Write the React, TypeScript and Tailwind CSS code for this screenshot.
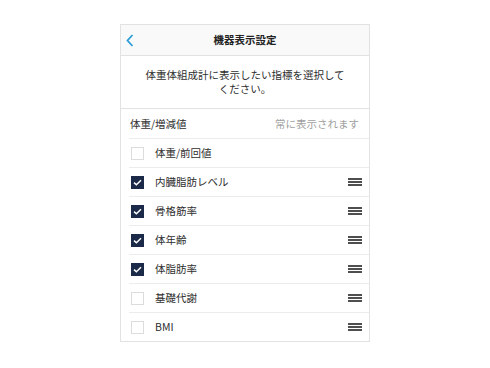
import React from 'react';

const items = [
  { label: '体重/前回値', checked: false, handle: false },
  { label: '内臓脂肪レベル', checked: true, handle: true },
  { label: '骨格筋率', checked: true, handle: true },
  { label: '体年齢', checked: true, handle: true },
  { label: '体脂肪率', checked: true, handle: true },
  { label: '基礎代謝', checked: false, handle: true },
  { label: 'BMI', checked: false, handle: true },
];

function CheckBox({ checked }: { checked: boolean }) {
  if (checked) {
    return (
      <span className="flex h-[13px] w-[13px] shrink-0 items-center justify-center bg-[#1b2a48]">
        <svg width="9" height="7" viewBox="0 0 9 7">
          <polyline points="1,3.6 3.4,5.8 8,1.2" fill="none" stroke="#fff" strokeWidth="1.5" />
        </svg>
      </span>
    );
  }
  return <span className="h-[13px] w-[13px] shrink-0 border border-[#dcdcdc] bg-white" />;
}

function Handle() {
  return (
    <svg width="14" height="8" viewBox="0 0 14 8" className="shrink-0">
      <line x1="0" y1="1" x2="14" y2="1" stroke="#222" strokeWidth="1.6" />
      <line x1="0" y1="4" x2="14" y2="4" stroke="#222" strokeWidth="1.6" />
      <line x1="0" y1="7" x2="14" y2="7" stroke="#222" strokeWidth="1.6" />
    </svg>
  );
}

export default function App() {
  return (
    <div className="min-h-screen bg-white pt-[24px]" style={{ fontFamily: '"Noto Sans CJK JP", "Noto Sans", sans-serif' }}>
      <div className="mx-auto w-[250px] border border-[#e2e2e2] bg-white text-[#2e2e2e]">
        <div className="relative flex h-[31px] items-center justify-center border-b border-[#e2e2e2] bg-[#f9f9f9]">
          <svg width="8" height="13" viewBox="0 0 8 13" className="absolute left-[5px] top-[9px]">
            <polyline points="6.5,1 1.5,6.5 6.5,12" fill="none" stroke="#2b9ed8" strokeWidth="1.8" />
          </svg>
          <span className="text-[10.5px] font-bold text-[#222]">機器表示設定</span>
        </div>
        <div className="border-b border-[#e2e2e2] px-4 py-[12px] text-center text-[10.5px] leading-[14px]">
          体重体組成計に表示したい指標を選択して
          <br />
          ください。
        </div>
        <div className="ml-2">
          <div className="flex h-[30px] items-center justify-between border-b border-[#ececec] pl-[1px] pr-[10px] text-[10.5px]">
            <span>体重/増減値</span>
            <span className="text-[#a0a0a0]">常に表示されます</span>
          </div>
          {items.map((it, i) => (
            <div
              key={it.label}
              className={`flex items-center pl-[2px] pr-[7px] text-[10.5px] ${i < items.length - 1 ? 'h-[29px] border-b border-[#ececec]' : 'h-[28px]'}`}
            >
              <CheckBox checked={it.checked} />
              <span className="ml-[11px] flex-1">{it.label}</span>
              {it.handle && <Handle />}
            </div>
          ))}
        </div>
      </div>
    </div>
  );
}
